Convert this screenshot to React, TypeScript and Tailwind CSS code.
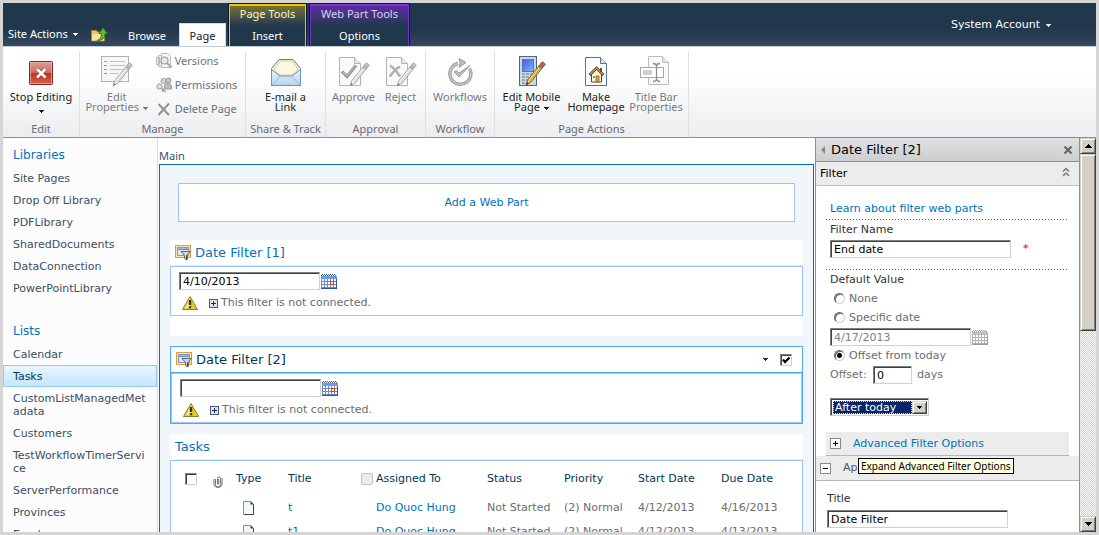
import { ReactNode } from "react";

const libraries = ["Site Pages", "Drop Off Library", "PDFLibrary", "SharedDocuments", "DataConnection", "PowerPointLibrary"];
const lists = ["Calendar", "Tasks", "CustomListManagedMetadata", "Customers", "TestWorkflowTimerService", "ServerPerformance", "Provinces", "Employees"];
const tasks = [
  { title: "t", to: "Do Quoc Hung", status: "Not Started", priority: "(2) Normal", start: "4/12/2013", due: "4/16/2013" },
  { title: "t1", to: "Do Quoc Hung", status: "Not Started", priority: "(2) Normal", start: "4/12/2013", due: "4/13/2013" },
];

const bevel =
  "border border-t-[#808080] border-l-[#808080] border-b-[#d4d0c8] border-r-[#d4d0c8] shadow-[inset_1px_1px_0_#404040]";
const field = bevel + " h-[18px] bg-white pt-px pl-[3px] pr-1 text-[11px] leading-[14px] text-black outline-none";
const raised =
  "border border-t-[#d4d0c8] border-l-[#d4d0c8] border-b-[#404040] border-r-[#404040] bg-[#d4d0c8] shadow-[inset_1px_1px_0_#fff,inset_-1px_-1px_0_#808080]";

function Caret({ className = "" }: { className?: string }) {
  return (
    <svg width="5" height="3" viewBox="0 0 5 3" className={"inline-block shrink-0 " + className} fill="currentColor" shapeRendering="crispEdges" aria-hidden="true">
      <path d="M0 0h5v1H0zM1 1h3v1H1zM2 2h1v1H2z" />
    </svg>
  );
}

function Pencil({ colored = false }: { colored?: boolean }) {
  return (
    <g strokeLinejoin="round">
      <path d="M14 24.500 L26 9.500 L29 12 L17 27 L12 30z" fill={colored ? "#f6cf62" : "#f1f1f1"} stroke={colored ? "#7a5a2a" : "#a3a3a3"} />
      <path d="M16 26 L28 11" stroke={colored ? "#c8923a" : "#cfcfcf"} />
      <path d="M26 9.500l1.500-2q1-1 2.200 0l1 1q1 1 0 1.800L29 12z" fill={colored ? "#cf5a5a" : "#c2c2c2"} stroke={colored ? "#8d4b4b" : "#a8a8a8"} />
      <path d="M24.800 10.800l3 2.600" stroke={colored ? "#4b7b52" : "#a6a6a6"} strokeWidth="1.500" />
      <path d="M12 30l1-3 2 1.600z" fill={colored ? "#333" : "#888"} />
    </g>
  );
}

function Icon32({ children }: { children: ReactNode }) {
  return (
    <svg width="32" height="32" viewBox="0 0 32 32" fill="none" aria-hidden="true" className="shrink-0">
      {children}
    </svg>
  );
}

const StopIcon = () => (
  <Icon32>
    <defs>
      <linearGradient id="red" x1="0" y1="0" x2="0" y2="1">
        <stop offset="0" stopColor="#d9a49c" />
        <stop offset="0.480" stopColor="#cf6a5c" />
        <stop offset="0.500" stopColor="#c2311d" />
        <stop offset="1" stopColor="#d8604a" />
      </linearGradient>
    </defs>
    <rect x="4.500" y="5.500" width="23" height="23" rx="1" fill="url(#red)" stroke="#7d2b22" />
    <rect x="5.500" y="6.500" width="21" height="21" stroke="#eab5ac" strokeOpacity="0.700" />
    <path d="M12 13l8.500 8.500M20.500 13L12 21.500" stroke="#a02a1a" strokeWidth="3.600" />
    <path d="M12 13l8.500 8.500M20.500 13L12 21.500" stroke="#fff" strokeWidth="2.600" />
  </Icon32>
);

const EditPropsIcon = () => (
  <Icon32>
    <rect x="0.500" y="0.500" width="27" height="25" fill="#f7f7f7" stroke="#b0b0b0" />
    <path d="M3 5.500h3M3 9.500h3M3 13.500h3M3 17.500h3" stroke="#979797" />
    <path d="M9 5.500h15M9 9.500h15M9 13.500h13M9 17.500h8" stroke="#c0c0c0" />
    <Pencil />
  </Icon32>
);

const MailIcon = () => (
  <Icon32>
    <defs>
      <linearGradient id="env" x1="0" y1="0" x2="0" y2="1">
        <stop offset="0" stopColor="#e9f3fb" />
        <stop offset="1" stopColor="#b3d6f0" />
      </linearGradient>
    </defs>
    <path d="M1.500 12.500L9 3.500h14l7.500 9v17h-29z" fill="#fbf1d8" stroke="#5f7f9c" />
    <path d="M4 13.500l6-8.500h12l6 8.500-6 5.500H10z" fill="#fdf6e2" stroke="#dccfa6" />
    <path d="M1.500 13.500L10 20h12l8.500-6.500v16h-29z" fill="url(#env)" stroke="#6d93b5" />
    <path d="M2 29l8.500-9M30 29l-8.500-9" stroke="#93b7d5" />
  </Icon32>
);

const ReviewIcon = ({ reject = false }: { reject?: boolean }) => (
  <Icon32>
    <path d="M1.500 1.500h15l6 6v22h-21z" fill="#f9f9f9" stroke="#b3b3b3" />
    <path d="M16.500 1.500v6h6" fill="#e8e8e8" stroke="#b3b3b3" />
    {reject ? (
      <path d="M5 9.500q5 3 10 11M15 10.500Q9 14 5 20.500" stroke="#b0b0b0" strokeWidth="2.600" />
    ) : (
      <>
        <path d="M4 15.500l5 5 9-11" stroke="#909090" strokeWidth="3" />
        <path d="M4.500 16l4.500 4 8.500-10" stroke="#c6c6c6" />
      </>
    )}
    <Pencil />
  </Icon32>
);

const WorkflowIcon = () => (
  <Icon32>
    <path d="M25.500 12.500A10.500 10.500 0 1 1 14 7.500" stroke="#a0a0a0" strokeWidth="3.400" />
    <path d="M25.500 12.500A10.500 10.500 0 1 1 14 7.500" stroke="#c4c4c4" strokeWidth="1.400" />
    <path d="M15 2.500l7 4-7 5 1-4z" fill="#bcbcbc" stroke="#999" />
    <path d="M10 16l5 5L26 9.500 15 17l-2.500-2.500z" fill="#c0c0c0" stroke="#9a9a9a" />
  </Icon32>
);

const MobileIcon = () => (
  <Icon32>
    <defs>
      <linearGradient id="scr" x1="0" y1="0" x2="1" y2="1">
        <stop offset="0" stopColor="#3a63d8" />
        <stop offset="1" stopColor="#7fb0fb" />
      </linearGradient>
    </defs>
    <rect x="3.500" y="0.500" width="17" height="29" fill="#cbd7e5" stroke="#52657c" />
    <rect x="6.500" y="3.500" width="11" height="12" fill="url(#scr)" stroke="#5674c4" />
    <path d="M6 18h3m1 0h3m1 0h4M6 21h3m1 0h3m1 0h4M6 24h3m1 0h3M6 27h3" stroke="#8796aa" strokeWidth="1.600" />
    <g transform="translate(-2 -1)">
      <Pencil colored />
    </g>
  </Icon32>
);

const HomeIcon = () => (
  <Icon32>
    <path d="M5.500 1.500h15l6 6v22h-21z" fill="#fcfdff" stroke="#5b7390" />
    <path d="M20.500 1.500v6h6" fill="#d8e4f2" stroke="#5b7390" />
    <path d="M11.500 18v8h10v-8l-5-5z" fill="#fff6d8" stroke="#54473a" />
    <path d="M9.500 19l7-7 7 7" stroke="#473c34" strokeWidth="2.600" />
    <path d="M10 18.500l6.500-6.500 6.500 6.500" stroke="#d99a3a" strokeWidth="1.200" />
    <path d="M21 12v4" stroke="#8d3b2b" strokeWidth="2" />
    <rect x="16" y="20" width="3" height="6" fill="#e3a32b" stroke="#7b5518" strokeWidth="0.700" />
    <rect x="13" y="20" width="2" height="2" fill="#6d9be0" />
  </Icon32>
);

const TitleBarIcon = () => (
  <Icon32>
    <path d="M8.500.5h14l6 6v22h-20z" fill="#f9f9f9" stroke="#bcbcbc" />
    <path d="M22.500.5v6h6" fill="#e8e8e8" stroke="#bcbcbc" />
    <rect x="0.500" y="11.500" width="23" height="10" fill="#fff" stroke="#a8a8a8" />
    <rect x="3" y="14" width="9" height="5" fill="#cfcfcf" />
    <path d="M13 7.500q3 0 3.500 2 .5-2 3.500-2M16.500 9v16M13 25.500q3 0 3.500-2 .5 2 3.500 2" stroke="#8e8e8e" strokeWidth="1.300" />
  </Icon32>
);

function Icon16({ children }: { children: ReactNode }) {
  return (
    <svg width="16" height="16" viewBox="0 0 16 16" fill="none" aria-hidden="true" className="shrink-0">
      {children}
    </svg>
  );
}

const VersionsIcon = () => (
  <Icon16>
    <path d="M.5 4.500h3v7h-3zM2.500 2.500h4v11h-4z" fill="#f2f2f2" stroke="#b8b8b8" />
    <path d="M5.500.5h6l3 3v11h-9z" fill="#f8f8f8" stroke="#b8b8b8" />
    <circle cx="8.500" cy="7.500" r="3.500" fill="#e8e8e8" stroke="#9c9c9c" strokeWidth="1.200" />
    <path d="M11 10l4.500 4.500" stroke="#a8a8a8" strokeWidth="2" />
  </Icon16>
);

const PermissionsIcon = () => (
  <Icon16>
    <circle cx="7.500" cy="4" r="2.500" fill="#d2d2d2" stroke="#a2a2a2" />
    <circle cx="12.500" cy="3.500" r="2.500" fill="#c2c2c2" stroke="#9a9a9a" />
    <path d="M8.500 12V9q0-2.500 3.500-2.500T15.500 9v3z" fill="#bcbcbc" stroke="#9a9a9a" />
    <circle cx="3.500" cy="9.500" r="2.700" fill="#dcdcdc" stroke="#9f9f9f" />
    <path d="M5.500 11l4 4M7.500 13l-1.500 1.500" stroke="#999" strokeWidth="1.600" />
  </Icon16>
);

const DeleteIcon = () => (
  <Icon16>
    <path d="M2.500 3l10.500 11M13 2.500L2.500 14" stroke="#929292" strokeWidth="2" />
  </Icon16>
);

const FilterIcon = () => (
  <Icon16>
    <rect x="0.500" y="0.500" width="15" height="12" fill="#fbe3ad" stroke="#e39c3a" />
    <rect x="2.500" y="2.500" width="11" height="8" fill="#dce9fb" stroke="#7d9ad8" />
    <path d="M3 3.500h10v1.500H3z" fill="#5f8be0" />
    <path d="M6 6.500h9.500l-3.500 4v4.500l-2.500-1.500v-3z" fill="#d4d4d4" stroke="#6a6a6a" />
    <path d="M12.500 10.500v4.500l-1.500-1v-3.500z" fill="#444" />
  </Icon16>
);

const CalendarIcon = ({ gray = false }: { gray?: boolean }) => (
  <svg width="16" height="15" viewBox="0 0 16 15" fill="none" aria-hidden="true" shapeRendering="crispEdges">
    <rect x="0" y="2" width="16" height="13" fill={gray ? "#b0b0b0" : "#6d86c8"} />
    <path d="M0 2h16v3H0z" fill={gray ? "#bdbdbd" : "#6f9ae8"} />
    <path d="M0 14h16v1H0zM15 5h1v9h-1z" fill={gray ? "#9a9a9a" : "#35529c"} />
    <path d="M0 1.500h16M1 .5h14" stroke={gray ? "#9a9a9a" : "#4c566c"} strokeDasharray="1 1" />
    <path d="M1 5h2v2H1zM4 5h2v2H4zM7 5h2v2H7zM10 5h2v2h-2zM13 5h2v2h-2zM1 8h2v2H1zM4 8h2v2H4zM7 8h2v2H7zM10 8h2v2h-2zM13 8h2v2h-2zM1 11h2v2H1zM4 11h2v2H4zM7 11h2v2H7zM10 11h2v2h-2zM13 11h2v2h-2z" fill="#fff" />
    {!gray && <rect x="9.500" y="7.500" width="3" height="3" stroke="#d8421e" />}
  </svg>
);

const WarningIcon = () => (
  <Icon16>
    <path d="M8 1.500L15.500 14.500H.5z" fill="#e9cb22" stroke="#8b7d2c" strokeLinejoin="round" />
    <path d="M8 3L3 13h5z" fill="#f8ec86" />
    <path d="M8 5v5M8 11.200v2" stroke="#333" strokeWidth="2.400" />
  </Icon16>
);

const FileIcon = () => (
  <svg width="11" height="14" viewBox="0 0 11 14" fill="none" aria-hidden="true">
    <path d="M.5.5h7l3 3v10H.5z" fill="#f3f7fb" stroke="#7d8ea5" />
    <path d="M10.500 3.500v10H1" stroke="#2f4463" />
    <path d="M7.500 0v3.500H11z" fill="#2f4463" />
  </svg>
);

function RibbonGroup({ label, width, children }: { label: string; width: string; children: ReactNode }) {
  return (
    <section className={"flex shrink-0 flex-col items-center border-r border-[#dfe1e4] text-[#666b73] " + width}>
      <div className="flex flex-1 pt-[5px]">{children}</div>
      <div className="h-[15px] text-[11px] leading-[14px] whitespace-nowrap">{label}</div>
    </section>
  );
}

function BigButton({ icon, lines, enabled = false, caret = "", width }: { icon: ReactNode; lines: string[]; enabled?: boolean; caret?: string; width: string }) {
  return (
    <button type="button" className={"flex flex-col items-center text-[11px] leading-[10px] whitespace-nowrap " + width + (enabled ? " text-[#1e1f21]" : " text-[#777b80]")}>
      {icon}
      <span className="mt-1">{lines[0]}</span>
      {caret === "below" ? <Caret className="mt-2" /> : null}
      {lines[1] ? (
        <span className="flex items-center gap-1">
          {lines[1]}
          {caret === "inline" ? <Caret className="mt-[3px]" /> : null}
        </span>
      ) : null}
    </button>
  );
}

function SmallButton({ icon, label }: { icon: ReactNode; label: string }) {
  return (
    <button type="button" className="flex h-6 items-center gap-[3px] text-[11px] whitespace-nowrap text-[#6b6f75]">
      {icon}
      {label}
    </button>
  );
}

function ContextTab({ group, tab, shell, width }: { group: string; tab: string; shell: string; width: string }) {
  return (
    <div className={"h-full border-x border-t border-[#111820] " + width}>
      <div className={"flex h-full flex-col items-center border-x border-t-2 " + shell}>
        <div className="h-[18px] text-[11px] leading-[16px] whitespace-nowrap">{group}</div>
        <a href="#context" className="mt-1 text-[11px] leading-[16px] text-white">{tab}</a>
      </div>
    </div>
  );
}

function NavSection({ title, items }: { title: string; items: string[] }) {
  return (
    <section className="mb-5">
      <h2 className="pt-px pl-[10px] text-[12px] leading-[23px] text-[#0072bc]">{title}</h2>
      <ul>
        {items.map((item) => (
          <li key={item}>
            <a
              href="#list"
              className={
                "block border pt-1 pr-2 pb-[3px] pl-[9px] text-[11px] leading-[13px] break-all " +
                (item === "Tasks" ? "border-[#91cdf2] bg-linear-to-b from-[#e6f5ff] to-[#c6e7fb] text-[#003759]" : "border-transparent text-[#3b4f65]")
              }
            >
              {item}
            </a>
          </li>
        ))}
      </ul>
    </section>
  );
}

function CheckBox({ checked = false, label }: { checked?: boolean; label: string }) {
  return (
    <span className="inline-grid size-3">
      <input type="checkbox" defaultChecked={checked} aria-label={label} className={bevel + " peer col-start-1 row-start-1 size-3 appearance-none bg-white"} />
      <svg viewBox="0 0 12 12" className="pointer-events-none col-start-1 row-start-1 hidden size-3 peer-checked:block" fill="none" aria-hidden="true">
        <path d="M3 5.500l2 2.500 4.500-4.500" stroke="#000" strokeWidth="2.200" />
      </svg>
    </span>
  );
}

function FilterBody({ value, name }: { value: string; name: string }) {
  return (
    <div className="h-[50px] border border-[#99c5f9] bg-white pt-[5px] pl-2">
      <div className="flex items-center gap-px">
        <input type="text" aria-label={name} defaultValue={value} className={field + " w-[141px]"} />
        <button type="button" aria-label="Pick a date"><CalendarIcon /></button>
      </div>
      <div className="mt-1 flex items-center pl-[3px] text-[11px] leading-[18px] text-[#6c6c6c]">
        <WarningIcon />
        <button type="button" aria-label="Expand" className="mr-[3px] ml-[11px] grid size-[9px] place-items-center border border-[#47597d] bg-[#dfe6f3]">
          <svg width="5" height="5" viewBox="0 0 5 5" shapeRendering="crispEdges" aria-hidden="true"><path d="M2 0h1v5H2zM0 2h5v1H0z" fill="#1b2c50" /></svg>
        </button>
        This filter is not connected.
      </div>
    </div>
  );
}

function Radio({ label, checked = false }: { label: string; checked?: boolean }) {
  return (
    <label className="flex h-[19px] items-center gap-1 pl-1 text-[11px] leading-[19px] text-[#6c6c6c]">
      <input
        type="radio"
        name="default"
        defaultChecked={checked}
        className="size-[11px] appearance-none rounded-full border border-t-[#606060] border-r-[#d4d0c8] border-b-[#d4d0c8] border-l-[#606060] bg-white shadow-[inset_1px_1px_0_#707070] checked:bg-[radial-gradient(circle,#000_2px,#fff_3px)]"
      />
      {label}
    </label>
  );
}

function Toggle({ open, label }: { open: boolean; label: string }) {
  return (
    <button type="button" aria-label={label} className="grid size-[11px] place-items-center border border-[#8a8a8a] bg-white">
      <svg width="5" height="5" viewBox="0 0 5 5" shapeRendering="crispEdges" aria-hidden="true">
        <path d={open ? "M0 2h5v1H0z" : "M2 0h1v5H2zM0 2h5v1H0z"} fill="#000" />
      </svg>
    </button>
  );
}

function DotRule() {
  return <div className="h-px w-[242px] bg-[repeating-linear-gradient(90deg,#3f5fc0_0_1px,transparent_1px_3px)]" />;
}

function TopBar() {
  return (
    <header className="flex h-[44px] shrink-0 items-end border-b border-[#c4cad1] bg-linear-to-b from-[#21374c] from-60% to-[#34485f] font-['Noto_Sans',sans-serif] text-[11px] text-white">
      <button type="button" className="flex h-6 w-[88px] items-center gap-[5px] pl-[5px] whitespace-nowrap">
        Site Actions
        <Caret />
      </button>
      <button type="button" aria-label="Navigate up" className="mb-1">
        <svg width="17" height="15" viewBox="0 0 17 15" fill="none" aria-hidden="true">
          <path d="M.5 3.500h5l1 1.500h7v9H.5z" fill="#eec65b" stroke="#a9802a" />
          <path d="M1 7h12v6.500H1z" fill="#fbe49a" />
          <path d="M6 13.500q4.500-1 4.500-7H8L12 1l4.500 5.500H14q0 7-8 7z" fill="#5cc22e" stroke="#2c7e16" />
        </svg>
      </button>
      <a href="#browse" className="h-[23px] w-[71px] pt-[5px] pl-5 leading-[16px]">Browse</a>
      <a href="#page" className="h-[23px] w-[47px] border-x border-t border-[#d5dae0] bg-white pt-1 text-center leading-[16px] text-[#14181d]">Page</a>
      <nav className="ml-[2px] flex h-full gap-[2px]">
        <ContextTab group="Page Tools" tab="Insert" width="w-[79px]" shell="border-[#f0c800] bg-linear-to-b from-[#77722b] to-[#21374c] to-50% text-[#fbf7c9]" />
        <ContextTab group="Web Part Tools" tab="Options" width="w-[101px]" shell="border-[#7b2fd6] bg-linear-to-b from-[#5a2aa5] to-[#21374c] to-50% text-[#ddd0f2]" />
      </nav>
      <button type="button" className="mr-[45px] mb-[13px] ml-auto flex items-center gap-[6px] font-['DejaVu_Sans',sans-serif] leading-[16px] whitespace-nowrap">
        System Account
        <Caret />
      </button>
    </header>
  );
}

function Ribbon() {
  return (
    <div className="flex h-[91px] shrink-0 border-b border-[#8b9097] bg-linear-to-b from-white from-30% to-[#ebedf0] pt-1 font-['Noto_Sans',sans-serif]">
      <RibbonGroup label="Edit" width="w-[77px]">
        <BigButton icon={<StopIcon />} lines={["Stop Editing"]} enabled caret="below" width="w-[76px]" />
      </RibbonGroup>
      <RibbonGroup label="Manage" width="w-[166px]">
        <BigButton icon={<EditPropsIcon />} lines={["Edit", "Properties"]} caret="inline" width="w-[70px]" />
        <div className="-mt-[7px] flex flex-col pr-[6px] pl-[4px]">
          <SmallButton icon={<VersionsIcon />} label="Versions" />
          <SmallButton icon={<PermissionsIcon />} label="Permissions" />
          <SmallButton icon={<DeleteIcon />} label="Delete Page" />
        </div>
      </RibbonGroup>
      <RibbonGroup label="Share & Track" width="w-[80px]">
        <BigButton icon={<MailIcon />} lines={["E-mail a", "Link"]} enabled width="w-[60px]" />
      </RibbonGroup>
      <RibbonGroup label="Approval" width="w-[100px]">
        <BigButton icon={<ReviewIcon />} lines={["Approve"]} width="w-[50px]" />
        <BigButton icon={<ReviewIcon reject />} lines={["Reject"]} width="w-[44px]" />
      </RibbonGroup>
      <RibbonGroup label="Workflow" width="w-[69px]">
        <BigButton icon={<WorkflowIcon />} lines={["Workflows"]} width="w-[60px]" />
      </RibbonGroup>
      <RibbonGroup label="Page Actions" width="w-[194px]">
        <BigButton icon={<MobileIcon />} lines={["Edit Mobile", "Page"]} enabled caret="inline" width="w-[66px]" />
        <BigButton icon={<HomeIcon />} lines={["Make", "Homepage"]} enabled width="w-[63px]" />
        <BigButton icon={<TitleBarIcon />} lines={["Title Bar", "Properties"]} width="w-[57px]" />
      </RibbonGroup>
    </div>
  );
}

function MainZone() {
  return (
    <main className="flex min-w-0 flex-1 flex-col pr-px pl-px">
      <div className="h-[26px] shrink-0 pt-[10px] font-['Noto_Sans',sans-serif] text-[11px] leading-[16px] text-[#3b4f65]">Main</div>
      <div className="flex flex-1 flex-col gap-[10px] border border-b-0 border-[#0072a8] bg-[#f1f6fa] px-[10px] pt-[18px]">
        <button type="button" className="mx-2 mb-2 h-[39px] border border-[#99c5f9] bg-white pt-[2px] text-[11px] text-[#0072bc]">Add a Web Part</button>

        <section className="bg-white pb-5">
          <div className="ml-[5px] flex h-[26px] items-center gap-1 border-b border-[#e8e8e8]">
            <FilterIcon />
            <h3 className="text-[13px] text-[#0072bc]">Date Filter [1]</h3>
          </div>
          <FilterBody value="4/10/2013" name="Date Filter [1]" />
        </section>

        <section className="border border-[#4babf5] bg-white">
          <div className="flex h-[26px] items-center gap-1 border-b border-[#4babf5] pl-[5px] text-[#003759]">
            <FilterIcon />
            <h3 className="text-[13px]">Date Filter [2]</h3>
            <button type="button" aria-label="Web part menu" className="mr-2 ml-auto flex items-center"><Caret /></button>
            <span className="mr-[10px] flex"><CheckBox checked label="Select Date Filter [2]" /></span>
          </div>
          <FilterBody value="" name="Date Filter [2]" />
        </section>

        <section className="flex flex-1 flex-col bg-white">
          <div className="ml-[5px] flex h-[26px] items-center border-b border-[#e8e8e8]">
            <h3 className="text-[13px] text-[#0072bc]">Tasks</h3>
          </div>
          <div className="flex-1 border border-b-0 border-[#99c5f9] pt-px">
            <table className="w-full table-fixed border-collapse text-left text-[11px] whitespace-nowrap">
              <colgroup>
                <col className="w-[42px]" />
                <col className="w-[23px]" />
                <col className="w-[52px]" />
                <col className="w-[73px]" />
                <col className="w-[126px]" />
                <col className="w-[77px]" />
                <col className="w-[74px]" />
                <col className="w-[83px]" />
                <col />
              </colgroup>
              <thead>
                <tr className="h-[34px] text-[#003759] *:p-0 *:font-normal">
                  <th><span className="flex pl-[14px]"><CheckBox label="Select all" /></span></th>
                  <th aria-label="Attachments">
                    <svg width="10" height="13" viewBox="0 0 10 13" fill="none" stroke="#6a7482" className="mt-1" aria-hidden="true">
                      <path d="M2.500 4v5.500a2.500 2.500 0 0 0 5 0V3.500a1.500 1.500 0 0 0-3 0V9a.8.8 0 0 0 1.200 0V4M1 4v6q1 2.500 4 2.500T9 10V3" />
                    </svg>
                  </th>
                  <th>Type</th>
                  <th>Title</th>
                  <th>
                    <span className="flex items-center gap-[3px]">
                      <span className="size-3 rounded-xs border border-[#c4c4c4] bg-[#ececec]" />
                      Assigned To
                    </span>
                  </th>
                  <th>Status</th>
                  <th>Priority</th>
                  <th>Start Date</th>
                  <th>Due Date</th>
                </tr>
              </thead>
              <tbody className="text-[#6c6c6c]">
                {tasks.map((t) => (
                  <tr key={t.title} className="h-6 *:p-0">
                    <td />
                    <td />
                    <td><span className="flex pl-[7px]"><FileIcon /></span></td>
                    <td><a href="#task" className="text-[#0072bc]">{t.title}</a></td>
                    <td className="pl-[15px]!"><a href="#user" className="text-[#0072bc]">{t.to}</a></td>
                    <td>{t.status}</td>
                    <td>{t.priority}</td>
                    <td>{t.start}</td>
                    <td>{t.due}</td>
                  </tr>
                ))}
              </tbody>
            </table>
          </div>
        </section>
      </div>
    </main>
  );
}

function ToolPane() {
  return (
    <aside className="flex w-[265px] shrink-0 flex-col overflow-hidden border-x border-[#8b9097] bg-white text-[11px] text-[#333]">
      <div className="flex h-6 shrink-0 items-center border-b border-[#8b9097] bg-linear-to-b from-[#e0e1e2] to-[#cdced0] pl-1 text-black">
        <svg width="6" height="10" viewBox="0 0 6 10" aria-hidden="true"><path d="M5 1v8L1 5z" fill="#8a8a8a" /></svg>
        <h2 className="pt-px pl-[5px] text-[13px]">Date Filter [2]</h2>
        <button type="button" aria-label="Close" className="mr-[6px] ml-auto">
          <svg width="10" height="10" viewBox="0 0 10 10" aria-hidden="true"><path d="M1.500 1.500l7 7M8.500 1.500l-7 7" stroke="#666" strokeWidth="2.200" /></svg>
        </button>
      </div>
      <div className="flex h-6 shrink-0 items-center border-b border-[#c3c3c3] bg-[#ececec] pl-1 text-black">
        <h3 className="pt-[2px]">Filter</h3>
        <button type="button" aria-label="Collapse" className="mr-[9px] mb-1 ml-auto">
          <svg width="8" height="10" viewBox="0 0 8 10" fill="none" aria-hidden="true"><path d="M1 4.500l3-3 3 3M1 9l3-3 3 3" stroke="#777" strokeWidth="1.500" /></svg>
        </button>
      </div>
      <div className="shrink-0 pl-[10px]">
        <div className="pt-[15px] pl-1 leading-[16px]"><a href="#learn" className="text-[#0072bc]">Learn about filter web parts</a></div>
        <div className="pt-[2px]"><DotRule /></div>
        <div className="pt-[1px] pl-1">
          <label htmlFor="filter-name" className="block leading-[18px]">Filter Name</label>
          <div className="mt-px flex items-center">
            <input id="filter-name" type="text" defaultValue="End date" className={field + " w-[181px]"} />
            <span className="pl-3 text-[#e00000]">*</span>
          </div>
        </div>
        <div className="pt-[11px]"><DotRule /></div>
        <fieldset className="pt-px pl-1">
          <legend className="float-left w-full leading-[18px]">Default Value</legend>
          <div className="clear-both">
            <Radio label="None" />
            <Radio label="Specific date" />
            <div className="mt-px flex items-center gap-px">
              <input type="text" aria-label="Specific date value" disabled defaultValue="4/17/2013" className={field + " w-[141px] text-[#808080]!"} />
              <button type="button" aria-label="Pick a date" disabled><CalendarIcon gray /></button>
            </div>
            <Radio label="Offset from today" checked />
            <div className="flex items-center pt-px text-[#6c6c6c]">
              <label htmlFor="offset" className="w-[43px] pt-px">Offset:</label>
              <input id="offset" type="text" defaultValue="0" className={field + " w-[39px]"} />
              <span className="pt-px pl-[5px]">days</span>
            </div>
          </div>
        </fieldset>
        <div className="pt-[14px] pl-1">
          <div className={bevel + " flex h-[18px] w-[99px] bg-white pt-[2px] pr-px pb-px pl-[2px]"}>
            <select aria-label="Offset direction" defaultValue="after" className="min-w-0 flex-1 appearance-none bg-[#0a246a] pl-[2px] text-[11px] leading-[13px] text-white outline-1 -outline-offset-1 outline-dotted outline-[#f5db95]">
              <option value="after">After today</option>
              <option value="before">Before today</option>
            </select>
            <span className={raised + " pointer-events-none grid w-[15px] place-items-center text-black"}><Caret /></span>
          </div>
        </div>
        <div className="relative mt-4 mr-[10px] flex h-6 items-center border-b border-[#b5b5b5] bg-[#ececec] pl-1">
          <Toggle open={false} label="Expand Advanced Filter Options" />
          <a href="#advanced" className="pt-px pl-3 text-[#0072bc]">Advanced Filter Options</a>
          <div role="tooltip" className="absolute top-[26px] left-8 border border-black bg-[#ffffe1] px-[2px] font-['Noto_Sans',sans-serif] text-[10px] leading-[14px] whitespace-nowrap text-black">
            Expand Advanced Filter Options
          </div>
        </div>
      </div>
      <div className="flex h-[25px] shrink-0 items-center border-b border-[#b5b5b5] bg-[#ececec] pl-1 text-[#555]">
        <Toggle open label="Collapse Appearance" />
        <span className="pt-px pl-3">Appearance</span>
      </div>
      <div className="pt-[9px] pl-[11px]">
        <label htmlFor="title" className="block leading-[18px]">Title</label>
        <input id="title" type="text" defaultValue="Date Filter" className={field + " mt-[2px] block w-[181px]"} />
      </div>
    </aside>
  );
}

function ScrollBar() {
  return (
    <div className="flex w-4 shrink-0 flex-col bg-[repeating-conic-gradient(#d4d0c8_0_25%,#fff_0_50%)] bg-[length:2px_2px]">
      <button type="button" aria-label="Scroll up" className={raised + " grid h-4 shrink-0 place-items-center"}>
        <svg width="7" height="4" viewBox="0 0 7 4" shapeRendering="crispEdges" aria-hidden="true"><path d="M3 0h1v1h1v1h1v1h1v1H0V3h1V2h1V1h1z" /></svg>
      </button>
      <div className={raised + " h-[45%]"} />
      <button type="button" aria-label="Scroll down" className={raised + " mt-auto grid h-4 shrink-0 place-items-center"}>
        <svg width="7" height="4" viewBox="0 0 7 4" shapeRendering="crispEdges" aria-hidden="true"><path d="M0 0h7v1H6v1H5v1H4v1H3V3H2V2H1V1H0z" /></svg>
      </button>
    </div>
  );
}

export default function App() {
  return (
    <div className="h-screen bg-[#d5d5d6] p-[3px] font-['DejaVu_Sans',sans-serif] text-[11px]">
      <div className="flex h-full flex-col overflow-hidden bg-white">
        <TopBar />
        <Ribbon />
        <div className="flex min-h-0 flex-1">
          <nav className="w-[155px] shrink-0 overflow-hidden border-r border-[#dbddde] bg-[#fcfcfc] pt-[5px]">
            <NavSection title="Libraries" items={libraries} />
            <NavSection title="Lists" items={lists} />
          </nav>
          <MainZone />
          <ToolPane />
          <ScrollBar />
        </div>
      </div>
    </div>
  );
}
